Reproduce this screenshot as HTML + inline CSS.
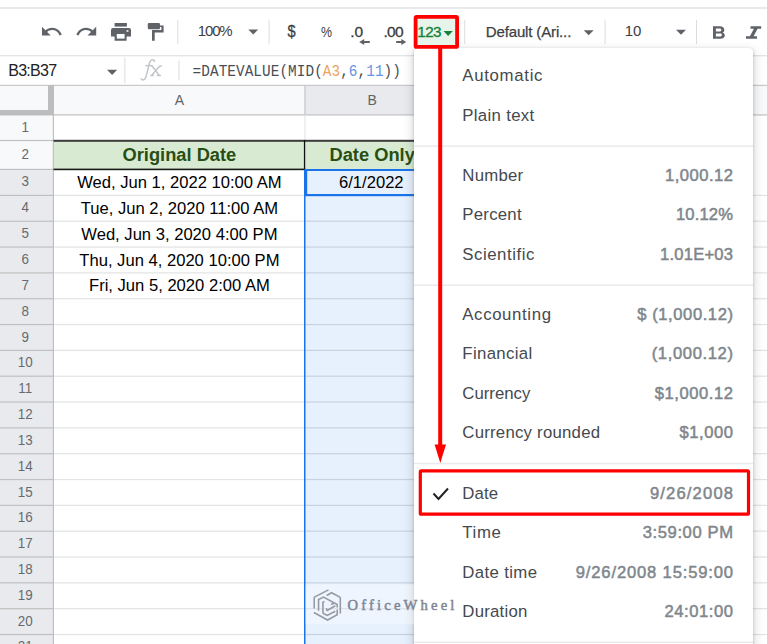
<!DOCTYPE html>
<html><head><meta charset="utf-8">
<style>
html,body{margin:0;padding:0;}
body{width:767px;height:644px;overflow:hidden;position:relative;background:#fff;font-family:"Liberation Sans",sans-serif;}
.a{position:absolute;white-space:nowrap;}
svg{position:absolute;left:0;top:0;overflow:visible;}
</style></head><body>

<svg width="767" height="644" viewBox="0 0 767 644">
<rect x="0" y="7" width="767" height="2" fill="#e8eaed"/>
<rect x="0" y="55" width="767" height="1.4" fill="#e3e5e8"/>
<rect x="0" y="85.5" width="767" height="29.3" fill="#f8f9fa"/>
<rect x="305" y="85.5" width="134" height="29.3" fill="#e8eaed"/>
<rect x="0" y="114.8" width="53" height="530" fill="#f8f9fa"/>
<rect x="0" y="169.4" width="53" height="480" fill="#e8eaed"/>
<rect x="53.5" y="140.5" width="386" height="28.9" fill="#d9ead3"/>
<rect x="305" y="169.4" width="134" height="480" fill="#e7f0fd"/>
<rect x="0" y="84.8" width="767" height="1.1" fill="#c4c4c4"/>
<rect x="0" y="114.3" width="767" height="1.2" fill="#c0c0c0"/>
<rect x="53.5" y="194.80" width="251" height="1.2" fill="#e2e3e3"/>
<rect x="305" y="194.80" width="134" height="1.2" fill="#c9d2de"/>
<rect x="439" y="194.80" width="330" height="1.2" fill="#e2e3e3"/>
<rect x="0" y="194.80" width="53.5" height="1.2" fill="#c0c0c0"/>
<rect x="53.5" y="220.63" width="251" height="1.2" fill="#e2e3e3"/>
<rect x="305" y="220.63" width="134" height="1.2" fill="#c9d2de"/>
<rect x="439" y="220.63" width="330" height="1.2" fill="#e2e3e3"/>
<rect x="0" y="220.63" width="53.5" height="1.2" fill="#c0c0c0"/>
<rect x="53.5" y="246.46" width="251" height="1.2" fill="#e2e3e3"/>
<rect x="305" y="246.46" width="134" height="1.2" fill="#c9d2de"/>
<rect x="439" y="246.46" width="330" height="1.2" fill="#e2e3e3"/>
<rect x="0" y="246.46" width="53.5" height="1.2" fill="#c0c0c0"/>
<rect x="53.5" y="272.29" width="251" height="1.2" fill="#e2e3e3"/>
<rect x="305" y="272.29" width="134" height="1.2" fill="#c9d2de"/>
<rect x="439" y="272.29" width="330" height="1.2" fill="#e2e3e3"/>
<rect x="0" y="272.29" width="53.5" height="1.2" fill="#c0c0c0"/>
<rect x="53.5" y="298.12" width="251" height="1.2" fill="#e2e3e3"/>
<rect x="305" y="298.12" width="134" height="1.2" fill="#c9d2de"/>
<rect x="439" y="298.12" width="330" height="1.2" fill="#e2e3e3"/>
<rect x="0" y="298.12" width="53.5" height="1.2" fill="#c0c0c0"/>
<rect x="53.5" y="323.95" width="251" height="1.2" fill="#e2e3e3"/>
<rect x="305" y="323.95" width="134" height="1.2" fill="#c9d2de"/>
<rect x="439" y="323.95" width="330" height="1.2" fill="#e2e3e3"/>
<rect x="0" y="323.95" width="53.5" height="1.2" fill="#c0c0c0"/>
<rect x="53.5" y="349.78" width="251" height="1.2" fill="#e2e3e3"/>
<rect x="305" y="349.78" width="134" height="1.2" fill="#c9d2de"/>
<rect x="439" y="349.78" width="330" height="1.2" fill="#e2e3e3"/>
<rect x="0" y="349.78" width="53.5" height="1.2" fill="#c0c0c0"/>
<rect x="53.5" y="375.61" width="251" height="1.2" fill="#e2e3e3"/>
<rect x="305" y="375.61" width="134" height="1.2" fill="#c9d2de"/>
<rect x="439" y="375.61" width="330" height="1.2" fill="#e2e3e3"/>
<rect x="0" y="375.61" width="53.5" height="1.2" fill="#c0c0c0"/>
<rect x="53.5" y="401.44" width="251" height="1.2" fill="#e2e3e3"/>
<rect x="305" y="401.44" width="134" height="1.2" fill="#c9d2de"/>
<rect x="439" y="401.44" width="330" height="1.2" fill="#e2e3e3"/>
<rect x="0" y="401.44" width="53.5" height="1.2" fill="#c0c0c0"/>
<rect x="53.5" y="427.27" width="251" height="1.2" fill="#e2e3e3"/>
<rect x="305" y="427.27" width="134" height="1.2" fill="#c9d2de"/>
<rect x="439" y="427.27" width="330" height="1.2" fill="#e2e3e3"/>
<rect x="0" y="427.27" width="53.5" height="1.2" fill="#c0c0c0"/>
<rect x="53.5" y="453.10" width="251" height="1.2" fill="#e2e3e3"/>
<rect x="305" y="453.10" width="134" height="1.2" fill="#c9d2de"/>
<rect x="439" y="453.10" width="330" height="1.2" fill="#e2e3e3"/>
<rect x="0" y="453.10" width="53.5" height="1.2" fill="#c0c0c0"/>
<rect x="53.5" y="478.93" width="251" height="1.2" fill="#e2e3e3"/>
<rect x="305" y="478.93" width="134" height="1.2" fill="#c9d2de"/>
<rect x="439" y="478.93" width="330" height="1.2" fill="#e2e3e3"/>
<rect x="0" y="478.93" width="53.5" height="1.2" fill="#c0c0c0"/>
<rect x="53.5" y="504.76" width="251" height="1.2" fill="#e2e3e3"/>
<rect x="305" y="504.76" width="134" height="1.2" fill="#c9d2de"/>
<rect x="439" y="504.76" width="330" height="1.2" fill="#e2e3e3"/>
<rect x="0" y="504.76" width="53.5" height="1.2" fill="#c0c0c0"/>
<rect x="53.5" y="530.59" width="251" height="1.2" fill="#e2e3e3"/>
<rect x="305" y="530.59" width="134" height="1.2" fill="#c9d2de"/>
<rect x="439" y="530.59" width="330" height="1.2" fill="#e2e3e3"/>
<rect x="0" y="530.59" width="53.5" height="1.2" fill="#c0c0c0"/>
<rect x="53.5" y="556.42" width="251" height="1.2" fill="#e2e3e3"/>
<rect x="305" y="556.42" width="134" height="1.2" fill="#c9d2de"/>
<rect x="439" y="556.42" width="330" height="1.2" fill="#e2e3e3"/>
<rect x="0" y="556.42" width="53.5" height="1.2" fill="#c0c0c0"/>
<rect x="53.5" y="582.25" width="251" height="1.2" fill="#e2e3e3"/>
<rect x="305" y="582.25" width="134" height="1.2" fill="#c9d2de"/>
<rect x="439" y="582.25" width="330" height="1.2" fill="#e2e3e3"/>
<rect x="0" y="582.25" width="53.5" height="1.2" fill="#c0c0c0"/>
<rect x="53.5" y="608.08" width="251" height="1.2" fill="#e2e3e3"/>
<rect x="305" y="608.08" width="134" height="1.2" fill="#c9d2de"/>
<rect x="439" y="608.08" width="330" height="1.2" fill="#e2e3e3"/>
<rect x="0" y="608.08" width="53.5" height="1.2" fill="#c0c0c0"/>
<rect x="53.5" y="633.91" width="251" height="1.2" fill="#e2e3e3"/>
<rect x="305" y="633.91" width="134" height="1.2" fill="#c9d2de"/>
<rect x="439" y="633.91" width="330" height="1.2" fill="#e2e3e3"/>
<rect x="0" y="633.91" width="53.5" height="1.2" fill="#c0c0c0"/>
<rect x="53.5" y="659.74" width="251" height="1.2" fill="#e2e3e3"/>
<rect x="305" y="659.74" width="134" height="1.2" fill="#c9d2de"/>
<rect x="439" y="659.74" width="330" height="1.2" fill="#e2e3e3"/>
<rect x="0" y="659.74" width="53.5" height="1.2" fill="#c0c0c0"/>
<rect x="0" y="139.90" width="53.5" height="1.2" fill="#c0c0c0"/>
<rect x="0" y="168.80" width="53.5" height="1.2" fill="#c0c0c0"/>
<rect x="52.8" y="85" width="1.2" height="560" fill="#c0c0c0"/>
<rect x="304.4" y="86" width="1.1" height="29" fill="#c0c0c0"/>
<rect x="304.4" y="114.8" width="1.1" height="26" fill="#e2e3e3"/>
<rect x="48" y="85" width="6" height="30" fill="#bdbdbd"/>
<rect x="0" y="110" width="54" height="5" fill="#bdbdbd"/>
<rect x="53.5" y="139.8" width="386" height="2" fill="#3a3a3a"/>
<rect x="53.5" y="168.6" width="252" height="1.6" fill="#1a1a1a"/>
<rect x="303.9" y="140" width="1.3" height="29.5" fill="#111"/>
<rect x="304.0" y="169.4" width="1.5" height="480" fill="#1a73e8"/>
<rect x="305" y="169" width="134" height="2" fill="#1a73e8"/>
<rect x="305" y="194" width="134" height="2.2" fill="#1a73e8"/>
<rect x="305" y="169" width="2.2" height="27" fill="#1a73e8"/>

 <path transform="translate(40.07 19.94) scale(0.965)" d="M12.5 8c-2.65 0-5.05.99-6.9 2.6L2 7v9h9l-3.62-3.62c1.39-1.16 3.16-1.88 5.12-1.88 3.54 0 6.55 2.31 7.6 5.5l2.37-.78C21.08 11.03 17.15 8 12.5 8z" fill="#5f6368"/>
 <path transform="translate(74.91 19.92) scale(0.968)" d="M18.4 10.6C16.55 8.99 14.15 8 11.5 8c-4.65 0-8.58 3.03-9.96 7.22L3.9 16c1.050-3.19 4.05-5.5 7.6-5.5 1.95 0 3.73.72 5.12 1.88L13 16h9V7l-3.6 3.6z" fill="#5f6368"/>
 <rect x="114.6" y="23" width="12.3" height="3.6" fill="#5f6368"/>
 <path d="M113 28 H129 A2 2 0 0 1 131 30 V36.6 H126.6 V40.8 H114.6 V36.6 H111 V30 A2 2 0 0 1 113 28 Z" fill="#5f6368"/>
 <rect x="116.8" y="34" width="7.8" height="4.6" fill="#fff"/>
 <rect x="126.6" y="30.2" width="1.8" height="1.6" fill="#fff"/>
 <rect x="147.8" y="23" width="12.2" height="6.3" rx="1.2" fill="#5f6368"/>
 <path d="M160 25.6 H163.6 V32.4 H154.7 V40.8 H152 V30 H161.4 V27 H160 Z" fill="#5f6368"/>
 <rect x="177.3" y="20" width="1" height="24" fill="#dadce0"/>
 <rect x="268.6" y="20" width="1" height="24" fill="#dadce0"/>
 <rect x="464.2" y="20" width="1" height="24" fill="#dadce0"/>
 <rect x="604.6" y="20" width="1" height="24" fill="#dadce0"/>
 <rect x="696" y="20" width="1" height="24" fill="#dadce0"/>
 <path d="M248.3 29.6 H258.2 L253.25 34.6 Z" fill="#5f6368"/>
 <path d="M359.2 42.05 L364.2 39 V41 H369.8 V43.1 H364.2 V45.1 Z" fill="#5f6368"/>
 <path d="M406.3 42.05 L401.3 39 V41 H396.2 V43.1 H401.3 V45.1 Z" fill="#5f6368"/>
 <path d="M583.7 30.3 H593.7 L588.7 35.3 Z" fill="#5f6368"/>
 <path d="M676 29.8 H686 L681 34.8 Z" fill="#5f6368"/>
 <!-- bold B icon -->
 <path d="M713 26.3 H719.5 C722.7 26.3 724.3 28 724.3 30 C724.3 31.3 723.6 32.2 722.6 32.6 C724 33.1 724.8 34.3 724.8 35.6 C724.8 37.6 723.2 38.8 720.3 38.8 H713 Z M715.9 28.6 V31.5 H719.1 C720.5 31.5 721.3 31 721.3 30 C721.3 29 720.5 28.6 719.1 28.6 Z M715.9 33.6 V36.5 H719.8 C721.2 36.5 721.9 35.9 721.9 35 C721.9 34.1 721.2 33.6 719.8 33.6 Z" fill="#5f6368" fill-rule="evenodd"/>
 <!-- italic I icon -->
 <path d="M750.5 26.3 H761.2 V28.8 H757.6 L753.6 36.3 H757 V38.8 H746 V36.3 H749.9 L753.9 28.8 H750.5 Z" fill="#5f6368"/>
 <!-- formula bar -->
 <path d="M107 69.8 H117.2 L112.1 75 Z" fill="#5f6368"/>
 <rect x="124.4" y="57.3" width="1" height="26" fill="#dadce0"/>
 <rect x="178.5" y="60.4" width="1" height="20" fill="#dadce0"/>
 <!-- fx -->
 <path d="M154.4 61.6 C154.6 59.5 151 58.8 149.8 62 C148.8 65 147.2 73 145.8 77.2 C144.8 80.3 142 80.6 141.2 78.8" stroke="#c2c5c9" stroke-width="1.5" fill="none" stroke-linecap="round"/>
 <path d="M145.3 65.6 H151.6" stroke="#c2c5c9" stroke-width="1.4" fill="none"/>
 <path d="M151.8 65.8 L159.6 75.6 M161.8 65.8 C160.5 65.6 159 66.5 157.2 68.8 L151.6 75.6 M150.3 75.6 H153.8 M156.8 75.6 H160.9 M150.8 65.8 H153" stroke="#c2c5c9" stroke-width="1.5" fill="none"/>

<text x="197.7" y="35.5" font-family="'Liberation Sans'" font-size="15" fill="#3c4043" textLength="35" lengthAdjust="spacing">100%</text>
<text transform="translate(287.6 36.9) scale(0.86 1)" x="0" y="0" font-family="'Liberation Sans'" font-size="17" fill="#3c4043" style="stroke:#3c4043;stroke-width:0.3">$</text>
<text transform="translate(320.9 36.6) scale(0.8 1)" x="0" y="0" font-family="'Liberation Sans'" font-size="15.5" fill="#3c4043">%</text>
<text x="350.2" y="36.6" font-family="'Liberation Sans'" font-size="15.5" fill="#3c4043" style="stroke:#3c4043;stroke-width:0.3">.0</text>
<text x="383.5" y="36.6" font-family="'Liberation Sans'" font-size="15.5" fill="#3c4043" textLength="20" lengthAdjust="spacing" style="stroke:#3c4043;stroke-width:0.3">.00</text>
<text x="485.8" y="36.7" font-family="'Liberation Sans'" font-size="15" fill="#3c4043" textLength="85.5" lengthAdjust="spacing" style="stroke:#3c4043;stroke-width:0.25">Default (Ari...</text>
<text x="624.8" y="35.8" font-family="'Liberation Sans'" font-size="15" fill="#3c4043" textLength="16.5" lengthAdjust="spacing">10</text>
<text x="8.2" y="76.1" font-family="'Liberation Sans'" font-size="16" fill="#202124" textLength="49" lengthAdjust="spacing">B3:B37</text>
<text transform="translate(192.6 76.1) scale(1 1.16)" x="0" y="0" font-family="'Liberation Mono'" font-size="14.35" fill="#4a4e53" textLength="208.3" lengthAdjust="spacing">=DATEVALUE(MID(<tspan fill="#f1a35e">A3</tspan>,<tspan fill="#6a93e0">6</tspan>,<tspan fill="#6a93e0">11</tspan>))</text>
<text x="179.5" y="104.8" font-family="'Liberation Sans'" font-size="14" fill="#5f6368" text-anchor="middle">A</text>
<text x="372.2" y="104.8" font-family="'Liberation Sans'" font-size="14" fill="#5f6368" text-anchor="middle">B</text>
<text transform="translate(25.3 132.0) scale(0.92 1)" x="0" y="0" font-family="'Liberation Sans'" font-size="14.6" fill="#666a6f" text-anchor="middle">1</text>
<text transform="translate(25.3 158.5) scale(0.92 1)" x="0" y="0" font-family="'Liberation Sans'" font-size="14.6" fill="#666a6f" text-anchor="middle">2</text>
<text transform="translate(25.3 186.2) scale(0.92 1)" x="0" y="0" font-family="'Liberation Sans'" font-size="14.6" fill="#666a6f" text-anchor="middle">3</text>
<text transform="translate(25.3 212.3) scale(0.92 1)" x="0" y="0" font-family="'Liberation Sans'" font-size="14.6" fill="#666a6f" text-anchor="middle">4</text>
<text transform="translate(25.3 238.2) scale(0.92 1)" x="0" y="0" font-family="'Liberation Sans'" font-size="14.6" fill="#666a6f" text-anchor="middle">5</text>
<text transform="translate(25.3 264.0) scale(0.92 1)" x="0" y="0" font-family="'Liberation Sans'" font-size="14.6" fill="#666a6f" text-anchor="middle">6</text>
<text transform="translate(25.3 289.8) scale(0.92 1)" x="0" y="0" font-family="'Liberation Sans'" font-size="14.6" fill="#666a6f" text-anchor="middle">7</text>
<text transform="translate(25.3 315.6) scale(0.92 1)" x="0" y="0" font-family="'Liberation Sans'" font-size="14.6" fill="#666a6f" text-anchor="middle">8</text>
<text transform="translate(25.3 341.5) scale(0.92 1)" x="0" y="0" font-family="'Liberation Sans'" font-size="14.6" fill="#666a6f" text-anchor="middle">9</text>
<text transform="translate(25.3 367.3) scale(0.92 1)" x="0" y="0" font-family="'Liberation Sans'" font-size="14.6" fill="#666a6f" text-anchor="middle">10</text>
<text transform="translate(25.3 393.1) scale(0.92 1)" x="0" y="0" font-family="'Liberation Sans'" font-size="14.6" fill="#666a6f" text-anchor="middle">11</text>
<text transform="translate(25.3 419.0) scale(0.92 1)" x="0" y="0" font-family="'Liberation Sans'" font-size="14.6" fill="#666a6f" text-anchor="middle">12</text>
<text transform="translate(25.3 444.8) scale(0.92 1)" x="0" y="0" font-family="'Liberation Sans'" font-size="14.6" fill="#666a6f" text-anchor="middle">13</text>
<text transform="translate(25.3 470.6) scale(0.92 1)" x="0" y="0" font-family="'Liberation Sans'" font-size="14.6" fill="#666a6f" text-anchor="middle">14</text>
<text transform="translate(25.3 496.5) scale(0.92 1)" x="0" y="0" font-family="'Liberation Sans'" font-size="14.6" fill="#666a6f" text-anchor="middle">15</text>
<text transform="translate(25.3 522.3) scale(0.92 1)" x="0" y="0" font-family="'Liberation Sans'" font-size="14.6" fill="#666a6f" text-anchor="middle">16</text>
<text transform="translate(25.3 548.1) scale(0.92 1)" x="0" y="0" font-family="'Liberation Sans'" font-size="14.6" fill="#666a6f" text-anchor="middle">17</text>
<text transform="translate(25.3 574.0) scale(0.92 1)" x="0" y="0" font-family="'Liberation Sans'" font-size="14.6" fill="#666a6f" text-anchor="middle">18</text>
<text transform="translate(25.3 599.8) scale(0.92 1)" x="0" y="0" font-family="'Liberation Sans'" font-size="14.6" fill="#666a6f" text-anchor="middle">19</text>
<text transform="translate(25.3 625.6) scale(0.92 1)" x="0" y="0" font-family="'Liberation Sans'" font-size="14.6" fill="#666a6f" text-anchor="middle">20</text>
<text transform="translate(25.3 651.4) scale(0.92 1)" x="0" y="0" font-family="'Liberation Sans'" font-size="14.6" fill="#666a6f" text-anchor="middle">21</text>
<text x="179.4" y="160.8" font-family="'Liberation Sans'" font-size="18.3" fill="#274e13" text-anchor="middle" font-weight="bold">Original Date</text>
<text x="329.5" y="160.8" font-family="'Liberation Sans'" font-size="18.3" fill="#274e13" font-weight="bold">Date Only</text>
<text x="179.4" y="188.0" font-family="'Liberation Sans'" font-size="16.6" fill="#000" text-anchor="middle">Wed, Jun 1, 2022 10:00 AM</text>
<text x="179.4" y="213.8" font-family="'Liberation Sans'" font-size="16.6" fill="#000" text-anchor="middle">Tue, Jun 2, 2020 11:00 AM</text>
<text x="179.4" y="239.7" font-family="'Liberation Sans'" font-size="16.6" fill="#000" text-anchor="middle">Wed, Jun 3, 2020 4:00 PM</text>
<text x="179.4" y="265.5" font-family="'Liberation Sans'" font-size="16.6" fill="#000" text-anchor="middle">Thu, Jun 4, 2020 10:00 PM</text>
<text x="179.4" y="291.3" font-family="'Liberation Sans'" font-size="16.6" fill="#000" text-anchor="middle">Fri, Jun 5, 2020 2:00 AM</text>
<text x="371.3" y="188.0" font-family="'Liberation Sans'" font-size="16.6" fill="#000" text-anchor="middle">6/1/2022</text>
</svg>

<div class="a" style="left:414px;top:47.7px;width:339px;height:640px;background:#fff;border-radius:4px;box-shadow:0 1px 3px rgba(60,64,67,.3),0 4px 8px 3px rgba(60,64,67,.15);"></div>

<svg width="767" height="644" viewBox="0 0 767 644">
<text x="462.3" y="80.9" font-family="'Liberation Sans'" font-size="16.8" fill="#45494e" textLength="80.2" lengthAdjust="spacing">Automatic</text>
<text x="462.3" y="120.5" font-family="'Liberation Sans'" font-size="16.8" fill="#45494e" textLength="71.9" lengthAdjust="spacing">Plain text</text>
<text x="462.3" y="180.9" font-family="'Liberation Sans'" font-size="16.8" fill="#45494e" textLength="60.8" lengthAdjust="spacing">Number</text>
<text x="733" y="180.9" font-family="'Liberation Sans'" font-size="16.6" fill="#80868b" text-anchor="end" textLength="68" lengthAdjust="spacing" style="stroke:#80868b;stroke-width:0.5">1,000.12</text>
<text x="462.3" y="220.2" font-family="'Liberation Sans'" font-size="16.8" fill="#45494e" textLength="59.3" lengthAdjust="spacing">Percent</text>
<text x="733" y="220.2" font-family="'Liberation Sans'" font-size="16.6" fill="#80868b" text-anchor="end" textLength="57" lengthAdjust="spacing" style="stroke:#80868b;stroke-width:0.5">10.12%</text>
<text x="462.3" y="259.5" font-family="'Liberation Sans'" font-size="16.8" fill="#45494e" textLength="72" lengthAdjust="spacing">Scientific</text>
<text x="733" y="259.5" font-family="'Liberation Sans'" font-size="16.6" fill="#80868b" text-anchor="end" textLength="73" lengthAdjust="spacing" style="stroke:#80868b;stroke-width:0.5">1.01E+03</text>
<text x="462.3" y="320.0" font-family="'Liberation Sans'" font-size="16.8" fill="#45494e" textLength="88.7" lengthAdjust="spacing">Accounting</text>
<text x="733" y="320.0" font-family="'Liberation Sans'" font-size="16.6" fill="#80868b" text-anchor="end" textLength="95.8" lengthAdjust="spacing" style="stroke:#80868b;stroke-width:0.5">$ (1,000.12)</text>
<text x="462.3" y="359.3" font-family="'Liberation Sans'" font-size="16.8" fill="#45494e" textLength="69.9" lengthAdjust="spacing">Financial</text>
<text x="733" y="359.3" font-family="'Liberation Sans'" font-size="16.6" fill="#80868b" text-anchor="end" textLength="81.3" lengthAdjust="spacing" style="stroke:#80868b;stroke-width:0.5">(1,000.12)</text>
<text x="462.3" y="398.7" font-family="'Liberation Sans'" font-size="16.8" fill="#45494e" textLength="68" lengthAdjust="spacing">Currency</text>
<text x="733" y="398.7" font-family="'Liberation Sans'" font-size="16.6" fill="#80868b" text-anchor="end" textLength="78.2" lengthAdjust="spacing" style="stroke:#80868b;stroke-width:0.5">$1,000.12</text>
<text x="462.3" y="438.2" font-family="'Liberation Sans'" font-size="16.8" fill="#45494e" textLength="137.8" lengthAdjust="spacing">Currency rounded</text>
<text x="733" y="438.2" font-family="'Liberation Sans'" font-size="16.6" fill="#80868b" text-anchor="end" textLength="53.4" lengthAdjust="spacing" style="stroke:#80868b;stroke-width:0.5">$1,000</text>
<text x="462.3" y="498.7" font-family="'Liberation Sans'" font-size="16.8" fill="#45494e" textLength="35.7" lengthAdjust="spacing">Date</text>
<text x="733" y="498.7" font-family="'Liberation Sans'" font-size="16.6" fill="#80868b" text-anchor="end" textLength="83.1" lengthAdjust="spacing" style="stroke:#80868b;stroke-width:0.5">9/26/2008</text>
<text x="462.3" y="538.1" font-family="'Liberation Sans'" font-size="16.8" fill="#45494e" textLength="38.6" lengthAdjust="spacing">Time</text>
<text x="733" y="538.1" font-family="'Liberation Sans'" font-size="16.6" fill="#80868b" text-anchor="end" textLength="90.3" lengthAdjust="spacing" style="stroke:#80868b;stroke-width:0.5">3:59:00 PM</text>
<text x="462.3" y="577.5" font-family="'Liberation Sans'" font-size="16.8" fill="#45494e" textLength="74.7" lengthAdjust="spacing">Date time</text>
<text x="733" y="577.5" font-family="'Liberation Sans'" font-size="16.6" fill="#80868b" text-anchor="end" textLength="157.2" lengthAdjust="spacing" style="stroke:#80868b;stroke-width:0.5">9/26/2008 15:59:00</text>
<text x="462.3" y="616.9" font-family="'Liberation Sans'" font-size="16.8" fill="#45494e" textLength="65.1" lengthAdjust="spacing">Duration</text>
<text x="733" y="616.9" font-family="'Liberation Sans'" font-size="16.6" fill="#80868b" text-anchor="end" textLength="68.6" lengthAdjust="spacing" style="stroke:#80868b;stroke-width:0.5">24:01:00</text>
<rect x="414" y="145.4" width="339" height="1.5" fill="#e8eaed"/>
<rect x="414" y="284.4" width="339" height="1.5" fill="#e8eaed"/>
<rect x="414" y="462.8" width="339" height="1.5" fill="#e8eaed"/>
<rect x="414" y="641.5" width="339" height="1.5" fill="#e8eaed"/>
<path d="M433.5 493.5 L438.5 499 L448 488.5" stroke="#202124" stroke-width="2" fill="none"/>
<rect x="415.6" y="16.9" width="41.5" height="30" rx="1" fill="#e6f4ea" stroke="#f00" stroke-width="3.8"/>
<text x="417.3" y="36.7" font-family="'Liberation Sans'" font-size="15.3" fill="#188038" textLength="24.3" lengthAdjust="spacing" style="stroke:#188038;stroke-width:0.3">123</text>
<path d="M443.5 31 H452.8 L448.15 36 Z" fill="#188038"/>
<rect x="438.2" y="48" width="4" height="398" fill="#f00"/>
<path d="M434.6 444.6 H446 L440.3 463 Z" fill="#f00"/>
<rect x="420.3" y="470.8" width="328.2" height="43.4" rx="1" fill="none" stroke="#f00" stroke-width="3.2"/>
</svg>
<svg width="767" height="644" viewBox="0 0 767 644">
<rect x="305.5" y="584.4" width="153" height="39.9" fill="#ffffff" fill-opacity="0.35"/>
<polyline points="313.90,597.35 328.50,589.90" fill="none" stroke="#959ba3" stroke-width="1.6" stroke-linejoin="miter"/>
<polyline points="314.21,597.35 314.21,608.53" fill="none" stroke="#959ba3" stroke-width="1.6" stroke-linejoin="miter"/>
<polyline points="313.90,612.57 327.57,620.02 337.19,614.75 337.19,609.47" fill="none" stroke="#959ba3" stroke-width="1.6" stroke-linejoin="miter"/>
<polyline points="340.30,597.35 340.30,613.50" fill="none" stroke="#959ba3" stroke-width="1.6" stroke-linejoin="miter"/>
<polyline points="326.63,595.49 331.60,592.70 340.30,597.35" fill="none" stroke="#959ba3" stroke-width="1.6" stroke-linejoin="miter"/>
<polyline points="318.56,610.71 318.56,599.53 323.53,597.04 337.19,604.50 337.19,607.60" fill="none" stroke="#959ba3" stroke-width="1.6" stroke-linejoin="miter"/>
<polyline points="322.91,613.19 322.91,602.32 324.46,601.39" fill="none" stroke="#959ba3" stroke-width="1.6" stroke-linejoin="miter"/>
<polyline points="322.91,613.19 327.25,615.37 335.33,611.33" fill="none" stroke="#959ba3" stroke-width="1.6" stroke-linejoin="miter"/>
<polyline points="326.63,610.71 335.33,605.74" fill="none" stroke="#959ba3" stroke-width="1.6" stroke-linejoin="miter"/>
<polyline points="326.63,610.71 326.63,608.22" fill="none" stroke="#959ba3" stroke-width="1.6" stroke-linejoin="miter"/>
<polyline points="330.98,604.50 334.09,603.25" fill="none" stroke="#959ba3" stroke-width="1.6" stroke-linejoin="miter"/>
<text x="347.4" y="610.2" font-family="'Liberation Serif'" font-size="14.6" fill="#7f8794" textLength="107" lengthAdjust="spacing" style="stroke:#7f8794;stroke-width:0.5">OfficeWheel</text>
</svg>
</body></html>
